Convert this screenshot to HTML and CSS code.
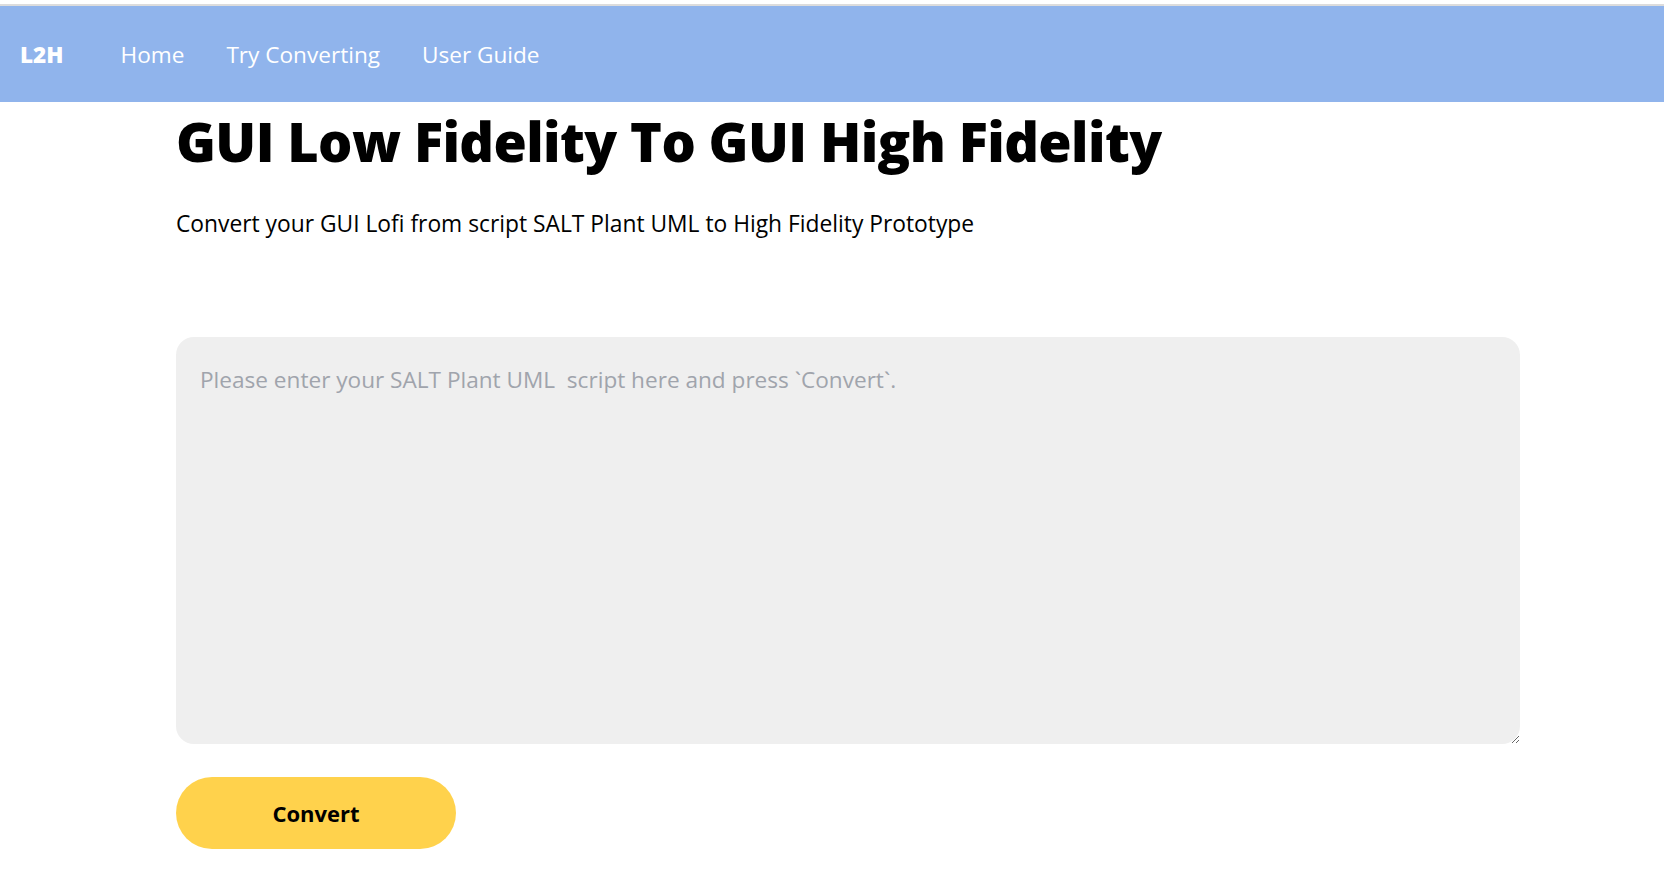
FILE: index.html
```html
<!DOCTYPE html>
<html lang="en">
<head>
<meta charset="utf-8">
<title>L2H</title>
<link rel="stylesheet" href="styles.css">
</head>
<body>
<div class="topline"></div>
<nav class="navbar">
  <a class="brand" href="#">L2H</a>
  <ul class="nav-links">
    <li><a href="#">Home</a></li>
    <li><a href="#">Try Converting</a></li>
    <li><a href="#">User Guide</a></li>
  </ul>
</nav>
<main class="content">
  <h1 class="title">GUI Low Fidelity To GUI High Fidelity</h1>
  <p class="subtitle">Convert your GUI Lofi from script SALT Plant UML to High Fidelity Prototype</p>
  <textarea class="script-input" placeholder="Please enter your SALT Plant UML  script here and press `Convert`."></textarea>
  <button class="convert-btn" type="button">Convert</button>
</main>
</body>
</html>
```
FILE: styles.css
```css
html, body {
  margin: 0;
  padding: 0;
  background: #ffffff;
  font-family: "Open Sans", "Noto Sans", sans-serif;
  color: #000;
}
.topline {
  height: 4px;
  background: #fff;
  border-bottom: 2px solid #dcdcdc;
}
.navbar {
  display: flex;
  align-items: center;
  height: 96px;
  background: #90b4ec;
  padding-left: 20px;
}
.brand {
  color: #fff;
  font-weight: 800;
  font-size: 22.5px;
  text-decoration: none;
  margin-right: 36px;
}
.nav-links {
  display: flex;
  list-style: none;
  margin: 0;
  padding: 0;
}
.nav-links a {
  display: block;
  color: #fff;
  text-decoration: none;
  font-size: 22.6px;
  padding: 0 21px;
}
.content {
  padding-left: 176px;
  width: 1344px;
}
.title {
  margin: 0;
  padding-top: 7px;
  font-size: 54px;
  font-weight: 800;
  letter-spacing: -0.6px;
  line-height: 64px;
}
.subtitle {
  margin: 34px 0 0;
  font-size: 22.8px;
  line-height: 34px;
}
.script-input {
  display: block;
  box-sizing: border-box;
  width: 1344px;
  height: 407px;
  margin-top: 96px;
  border: none;
  border-radius: 18px;
  background: #efefef;
  padding: 27px 24px;
  font-family: inherit;
  font-size: 22.6px;
  line-height: 32px;
  resize: vertical;
  outline: none;
}
.script-input::placeholder {
  color: #a0a4ac;
}
.convert-btn {
  display: block;
  margin-top: 33px;
  width: 280px;
  height: 72px;
  border: none;
  border-radius: 36px;
  background: #ffd24c;
  font-family: inherit;
  font-weight: 700;
  font-size: 22px;
  color: #000;
}
```
